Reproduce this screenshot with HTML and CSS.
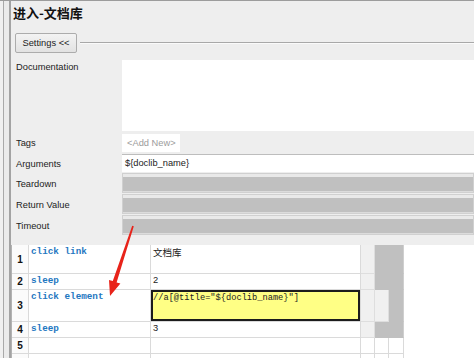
FILE: index.html
```html
<!DOCTYPE html>
<html lang="zh-CN">
<head>
    <meta charset="UTF-8">
    <meta name="viewport" content="width=device-width, initial-scale=1.0">
    <title>进入-文档库</title>
    <link rel="stylesheet" href="styles.css">
</head>
<body>
    <div class="window">
        <div class="outer">
            <div class="panel">
                <div class="title">进入-文档库</div>

                <div class="settings-bar">
                    <button class="settings-button">Settings &lt;&lt;</button>
                    <div class="rule"></div>
                </div>

                <div class="form">
                    <div class="label label-top">Documentation</div>
                    <div class="doc-field"></div>

                    <div class="label">Tags</div>
                    <div class="tags-field"><span class="add-new">&lt;Add New&gt;</span></div>

                    <div class="label">Arguments</div>
                    <div class="text-field">${doclib_name}</div>

                    <div class="label">Teardown</div>
                    <div class="disabled-field"></div>

                    <div class="label">Return Value</div>
                    <div class="disabled-field"></div>

                    <div class="label">Timeout</div>
                    <div class="disabled-field"></div>
                </div>

                <div class="steps-pane">
                    <div class="steps">
                        <div class="cell num">1</div>
                        <div class="cell kw">click link</div>
                        <div class="cell val cjk">文档库</div>
                        <div class="cell light"></div>
                        <div class="cell shade"></div>
                        <div class="cell shade last"></div>

                        <div class="cell num">2</div>
                        <div class="cell kw">sleep</div>
                        <div class="cell val">2</div>
                        <div class="cell light"></div>
                        <div class="cell shade"></div>
                        <div class="cell shade last"></div>

                        <div class="cell num">3</div>
                        <div class="cell kw">click element</div>
                        <div class="cell val selected">//a[@title="${doclib_name}"]</div>
                        <div class="cell light"></div>
                        <div class="cell light"></div>
                        <div class="cell shade last"></div>

                        <div class="cell num">4</div>
                        <div class="cell kw">sleep</div>
                        <div class="cell val">3</div>
                        <div class="cell light"></div>
                        <div class="cell shade"></div>
                        <div class="cell shade last"></div>

                        <div class="cell num">5</div>
                        <div class="cell kw"></div>
                        <div class="cell val"></div>
                        <div class="cell"></div>
                        <div class="cell"></div>
                        <div class="cell"></div>

                        <div class="cell num"></div>
                        <div class="cell kw"></div>
                        <div class="cell val"></div>
                        <div class="cell"></div>
                        <div class="cell"></div>
                        <div class="cell"></div>
                    </div>
                </div>
            </div>
        </div>
    </div>

    <svg class="arrow" width="474" height="358" viewBox="0 0 474 358">
        <polygon points="133.8,226.2 116.6,282.4 120.4,283.6 110,296 109,279.9 112.8,281.1 132.2,225.8" fill="#e8231a"/>
    </svg>
</body>
</html>
```

FILE: styles.css
```css
body {
    margin: 0;
    position: relative;
    background-color: #f0f0f0;
    font-family: "Liberation Sans", Arial, "Noto Sans CJK SC", sans-serif;
    font-size: 9.3px;
    color: #222;
}

.window {
    height: 358px;
    overflow: hidden;
    border-top: 1px solid #9c9c9c;
    padding-left: 3px;
    box-sizing: border-box;
}

.outer {
    height: 100%;
    border-left: 1px solid #a9a9a9;
    padding-left: 5px;
    background-color: #ebebeb;
}

.panel {
    height: 100%;
    border-left: 2px solid #a3a3a3;
    background-color: #eeeeee;
    display: flex;
    flex-direction: column;
}

.title {
    padding: 4px 0 0 2px;
    font-family: "Noto Sans CJK SC", sans-serif;
    font-size: 13px;
    font-weight: bold;
    line-height: 16px;
    color: #111;
}

.settings-bar {
    display: flex;
    align-items: center;
    margin-top: 12px;
    padding-left: 4px;
}

.settings-button {
    height: 20px;
    width: 62px;
    padding: 0;
    font-family: "Liberation Sans", Arial, sans-serif;
    font-size: 9.3px;
    color: #222;
    border: 1px solid #acacac;
    border-radius: 2px;
    background: linear-gradient(#f3f3f3, #e2e2e2);
}

.rule {
    flex: 1;
    margin-left: 3px;
    border-top: 1px solid #a8a8a8;
    border-bottom: 1px solid #fafafa;
}

.form {
    display: grid;
    grid-template-columns: 111px 1fr;
    grid-template-rows: 71px 23px 19px 21px 21px 21px;
    margin-top: 7px;
}

.label {
    align-self: center;
    padding-left: 5px;
}

.label-top {
    align-self: start;
    padding-top: 2px;
}

.doc-field {
    background-color: #fff;
}

.tags-field {
    padding-top: 3px;
}

.add-new {
    display: inline-block;
    width: 58px;
    height: 18px;
    line-height: 18px;
    padding-left: 5px;
    box-sizing: border-box;
    background-color: #fff;
    color: #9c9c9c;
}

.text-field {
    margin-bottom: 1px;
    border-top: 1px solid #bdbdbd;
    background-color: #fff;
    padding-left: 3px;
    line-height: 16px;
}

.disabled-field {
    margin-bottom: 1px;
    border: 1px solid #d0d0d0;
    background-color: #c0c0c0;
    box-shadow: inset 0 3px 0 #e9e9e9, inset 0 -1px 0 #dcdcdc;
}

.steps-pane {
    flex: 1;
    margin-top: 9px;
    border-left: 1px solid #b3b3b3;
    background-color: #fff;
}

.steps {
    display: grid;
    grid-template-columns: 17px 122px 210px 14px 14px 15px;
    grid-template-rows: 29px 16px 32px 16px 16px 16px;
}

.cell {
    box-sizing: border-box;
    border-right: 1px solid #dadada;
    border-bottom: 1px solid #dadada;
    overflow: hidden;
    white-space: nowrap;
}

.num {
    display: flex;
    align-items: center;
    justify-content: center;
    font-weight: bold;
    font-size: 10px;
    color: #111;
    background-color: #fbfbfb;
}

.kw {
    padding: 1px 0 0 2px;
    font-family: "Liberation Mono", "Courier New", monospace;
    font-weight: bold;
    font-size: 9.3px;
    color: #1f78c1;
}

.val {
    padding: 1px 0 0 2px;
    color: #222;
}

.cjk {
    font-family: "Noto Sans CJK SC", sans-serif;
    font-size: 9.5px;
    padding-top: 0;
}

.selected {
    font-family: "Liberation Mono", "Courier New", monospace;
    font-size: 8.7px;
    background-color: #ffff85;
    box-shadow: inset 0 0 0 2px #1c1c1c;
    padding-top: 3px;
}

.light {
    background-color: #f0f0f0;
    border-color: #dedede;
}

.shade {
    background-color: #c0c0c0;
    border-color: #c0c0c0;
}

.shade.last {
    border-right-color: #cfcfcf;
}

.arrow {
    position: absolute;
    top: 0;
    left: 0;
    pointer-events: none;
}
```
